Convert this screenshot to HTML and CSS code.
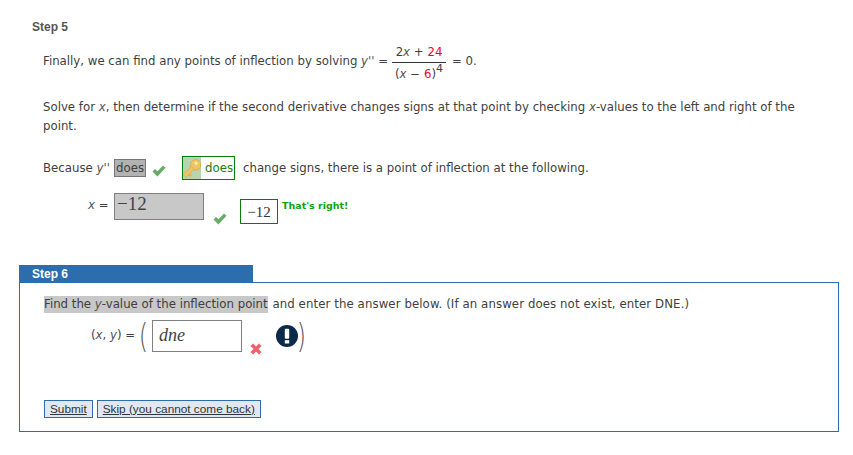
FILE: index.html
```html
<!DOCTYPE html>
<html lang="en">
<head>
<meta charset="utf-8">
<title>Step 5 and Step 6</title>
<link rel="stylesheet" href="styles.css">
</head>
<body>
<section class="step-five">
  <h2 class="step-label">Step 5</h2>
  <div class="row equation">
    <span class="lead">Finally, we can find any points of inflection by solving <i>y''</i> =</span>
    <span class="fraction">
      <span class="numerator">2<i>x</i> + <span class="red">24</span></span>
      <span class="denominator">(<i>x</i> − <span class="red">6</span>)<sup>4</sup></span>
    </span>
    <span>= 0.</span>
  </div>
  <p class="solve">Solve for <i>x</i>, then determine if the second derivative changes signs at that point by checking <i>x</i>-values to the left and right of the point.</p>
  <div class="row because">
    <span class="because-text">Because <i>y''</i></span>
    <span class="chosen">does</span>
    <svg class="check check-a" viewBox="0 0 14 12"><path d="M0.500 6.500l2.500-2.500 2.500 2.200 5.500-5.700 2.500 2.300-8 8.700z"/></svg>
    <span class="key-answer">
      <span class="key-box"><svg viewBox="0 0 18 22" class="key"><g transform="rotate(45 9 11)"><circle cx="9" cy="5.500" r="5.500" fill="#efc464" stroke="#dda744" stroke-width=".8"/><rect x="7" y="10" width="4" height="12" fill="#efc464" stroke="#dda744" stroke-width=".6"/><rect x="11" y="16" width="3" height="2.500" fill="#e5b450"/><circle cx="8" cy="4" r="1.600" fill="#fbeeb8"/></g></svg></span>
      <span class="key-text">does</span>
    </span>
    <span class="rest">change signs, there is a point of inflection at the following.</span>
  </div>
  <div class="row answer-row">
    <span class="x-label"><i>x</i> =</span>
    <span class="filled">−12</span>
    <svg class="check check-b" viewBox="0 0 14 12"><path d="M0.500 6.500l2.500-2.500 2.500 2.200 5.500-5.700 2.500 2.300-8 8.700z"/></svg>
    <span class="correct-box">−12</span>
    <span class="right">That's right!</span>
  </div>
</section>
<section class="step-six">
  <h2 class="tab">Step 6</h2>
  <div class="panel">
    <p class="prompt"><span class="highlight">Find the <i>y</i>-value of the inflection point</span> <span class="tail">and enter the answer below. (If an answer does not exist, enter DNE.)</span></p>
    <div class="row entry">
      <span class="xy">(<i>x</i>, <i>y</i>) =</span>
      <span class="paren">(</span>
      <span class="entry-box">dne</span>
      <svg class="cross" viewBox="0 0 12 12"><path d="M0.500 3l2.500-2.500 3 3 3-3 2.500 2.500-3 3 3 3-2.500 2.500-3-3-3 3-2.500-2.500 3-3z"/></svg>
      <svg class="alert" viewBox="0 0 20 20"><circle cx="10" cy="10" r="10" fill="#0b2a4a"/><rect x="8" y="3.500" width="4" height="9" rx="1" fill="#fff"/><rect x="8" y="13.800" width="4" height="3" fill="#fff"/></svg>
      <span class="paren paren-end">)</span>
    </div>
    <div class="buttons">
      <button class="btn" type="button">Submit</button>
      <button class="btn" type="button">Skip (you cannot come back)</button>
    </div>
  </div>
</section>
</body>
</html>
```
FILE: styles.css
```css
* { box-sizing: border-box; }
html, body { margin: 0; padding: 0; background: #fff; }
body {
  width: 853px;
  height: 455px;
  overflow: hidden;
  font: 11.76px/19px "DejaVu Sans", Verdana, sans-serif;
  color: #3f3f3f;
}
i { color: #555; }
.row { display: flex; align-items: center; }
.step-five { padding: 20px 0 0 32px; height: 265px; }
.step-label { margin: 0; font: bold 12px/15px "Liberation Sans", Arial, sans-serif; color: #555; }
.equation { margin: 4px 0 0 11px; height: 44px; }
.lead { width: 342px; white-space: nowrap; }
.fraction { display: inline-flex; flex-direction: column; align-items: center; margin: 4px 6px 0 7px; }
.numerator { line-height: 19px; height: 21px; border-bottom: 1px solid #333; width: 54px; text-align: center; padding-top: 1px; }
.denominator { line-height: 19px; padding-top: 2px; }
.denominator sup { font-size: 11px; line-height: 0; vertical-align: 6px; }
.red { color: #f00030; }
.solve { margin: 15px 0 0 11px; width: 770px; }
.because { margin: 20px 0 0 11px; height: 24px; }
.because-text { width: 71px; white-space: nowrap; }
.chosen { background: #b2b2b2; border: 1px solid #777; width: 32px; height: 18px; line-height: 16px; text-align: center; }
.check { fill: #68ac68; width: 14px; height: 12px; }
.check-a { margin: 6px 0 0 6px; }
.key-answer { display: flex; border: 1px solid #0a7a0a; height: 24px; width: 53px; margin-left: 16px; align-items: stretch; }
.key-box { background: #b6d4b0; width: 18px; display: flex; align-items: center; justify-content: center; }
.key { width: 18px; height: 21px; }
.key-text { color: #2a7a10; padding: 0 0 0 4px; line-height: 22px; }
.rest { margin-left: 8px; }
.answer-row { margin: 13px 0 0 56px; align-items: flex-start; }
.x-label { width: 26px; line-height: 27px; margin-top: -1px; }
.filled { width: 90px; height: 27px; background: #c8c8c8; border: 1px solid #808080; font: 19px/20px "Liberation Serif", serif; color: #444; padding-left: 2px; }
.check-b { margin: 20px 0 0 9px; }
.correct-box { border: 1px solid #0a7a0a; width: 38px; height: 25px; margin: 6px 0 0 13px; font: 15px/25px "Liberation Serif", serif; color: #333; text-align: center; }
.right { font: bold 9.500px/14px "DejaVu Sans", sans-serif; color: #12a012; margin: 6px 0 0 4px; }
.step-six { margin-left: 19px; width: 820px; }
.tab { margin: 0; width: 234px; height: 17px; background: #2e6dab; color: #fff; font: bold 12px/19px "Liberation Sans", Arial, sans-serif; padding-left: 13px; }
.panel { border: 1px solid #2e6dab; height: 150px; padding: 11px 0 0 24px; }
.prompt { margin: 0; line-height: 20px; }
.highlight { background: #c8c8c8; padding: 1px 0 2px; }
.tail { letter-spacing: .09px; margin-left: 1px; }
.entry { margin: 5px 0 0 47px; height: 33px; }
.xy { white-space: nowrap; width: 45px; }
.paren { font: 200 34px/32px "DejaVu Sans", sans-serif; color: #555; transform: scaleX(.7); width: 12px; text-align: center; margin-left: 1px; }
.entry-box { width: 90px; height: 32px; border: 1px solid #808080; font: italic 18px/28px "Liberation Serif", serif; color: #444; padding-left: 6px; margin-left: 3px; }
.cross { width: 12px; height: 12px; fill: #f0606a; margin: 26px 0 0 8px; }
.alert { width: 22px; height: 22px; margin: 0 0 0 14px; }
.paren-end { margin-left: -3px; }
.buttons { display: flex; gap: 4px; margin-top: 48px; }
.btn { height: 18px; padding: 0 5px; background: #dfe8f3; border: 1px solid #2e6dab; color: #333; font: 11.8px/15px "Liberation Sans", Arial, sans-serif; text-decoration: underline; }
```
